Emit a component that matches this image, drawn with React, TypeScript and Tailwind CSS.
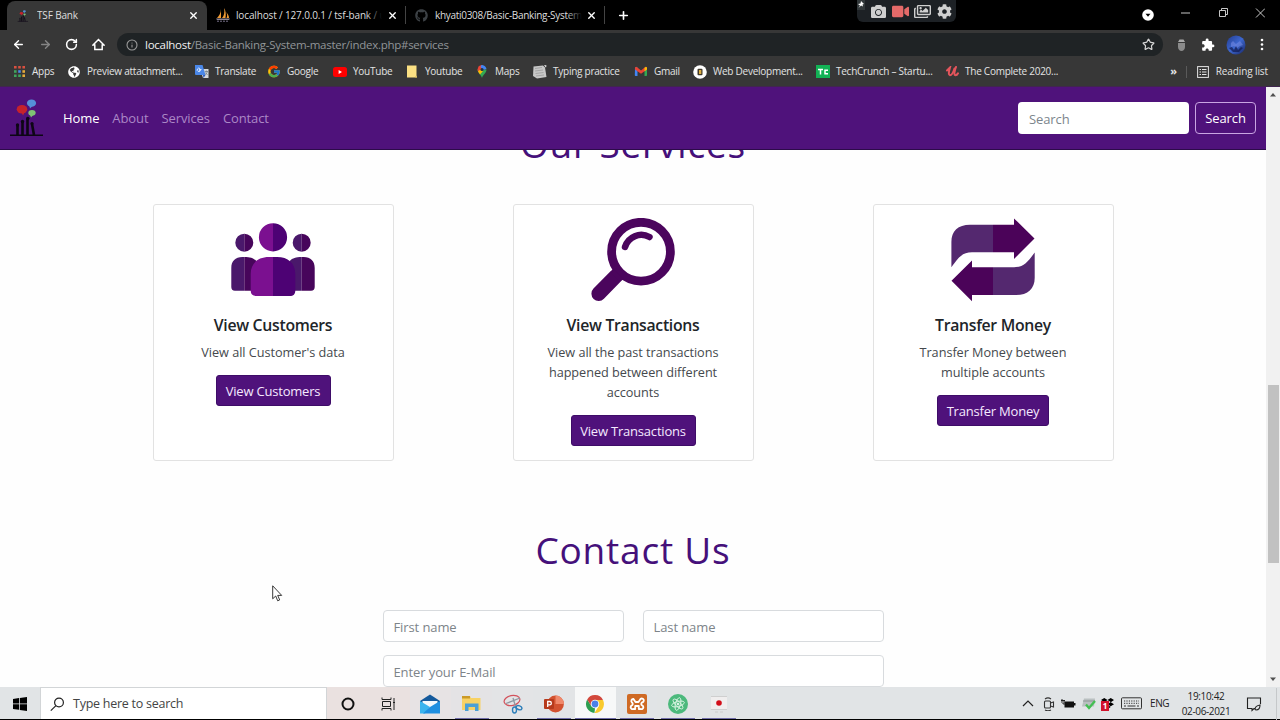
import React from "react";
import { ArrowLeft, ArrowRight, RotateCw, Info, X, Plus, Star } from "lucide-react";
import { FaGithub, FaCamera, FaVideo, FaRegImages, FaCog, FaGlobeAmericas, FaDropbox } from "react-icons/fa";
import { FcGoogle } from "react-icons/fc";
import { MdExtension } from "react-icons/md";

const BankLogo = ({ className }: { className: string }) => (
  <svg className={className} viewBox="0 0 34 38">
    <path d="M0 36.200h33" stroke="#0d0615" strokeWidth="1.600" />
    <path d="M7.500 36V27M12.500 36V23M17.500 36V20M24 36L22 25" stroke="#0d0615" strokeWidth="2.600" />
    <circle cx="7.500" cy="26" r="1.700" fill="#0d0615" />
    <circle cx="12.500" cy="22.500" r="1.700" fill="#0d0615" />
    <circle cx="17.800" cy="19.500" r="1.800" fill="#0d0615" />
    <circle cx="22" cy="24.500" r="1.600" fill="#0d0615" />
    <ellipse cx="12" cy="10.300" rx="5.300" ry="4.200" fill="#c5222c" />
    <path d="M11 12.500l2 4 2-4z" fill="#c5222c" />
    <ellipse cx="21.500" cy="4.100" rx="4.600" ry="3.600" fill="#5590d8" />
    <path d="M19 5.500l1 4 3-3z" fill="#5590d8" />
    <ellipse cx="22" cy="13.800" rx="3.700" ry="2.900" fill="#7fc374" />
    <path d="M19.500 14.500l1.500 4 2.500-3z" fill="#7fc374" />
  </svg>
);

const SailIcon = () => (
  <svg width="14" height="14" viewBox="0 0 14 14">
    <path d="M5 1C5 5 3 8 1 10h4zM8 0c1 4 0 8-2 10h3.500C10 6 10 3 8 0zM10 4c1.500 2 1.500 4 .5 6H13c0-2-1-4-3-6z" fill="#ee9a35" />
    <path d="M0 10.500h14l-1 1.500H1z" fill="#8a8291" />
    <path d="M1 13.200h12" stroke="#77708a" strokeWidth="1" strokeDasharray="2 1" />
  </svg>
);

const TabTitle = ({ children }: { children: React.ReactNode }) => (
  <span className="flex-1 overflow-hidden whitespace-nowrap text-[10px] tracking-[-0.15px]">{children}</span>
);

const TabStrip = () => (
  <div className="flex h-[30px] items-center bg-black pl-[7px] text-[#dedede]">
    <div className="mt-px flex h-[29px] w-[200px] items-center self-start rounded-t-lg bg-[#373737] pl-[10px] pr-[8px]">
      <BankLogo className="mr-2 h-3 w-3" />
      <TabTitle>TSF Bank</TabTitle>
      <X size={11} strokeWidth={3} className="text-white" />
    </div>
    <div className="flex h-[18px] w-[199px] items-center border-r border-[#444] pl-[9px] pr-[7px]">
      <SailIcon />
      <div className="relative ml-[6px] flex h-4 w-[146px] items-center overflow-hidden">
        <TabTitle>localhost / 127.0.0.1 / tsf-bank / u</TabTitle>
        <div className="absolute inset-y-0 right-0 w-4 bg-gradient-to-r from-transparent to-black" />
      </div>
      <X size={11} strokeWidth={3} className="ml-auto text-white" />
    </div>
    <div className="flex h-[18px] w-[199px] items-center border-r border-[#444] pl-[9px] pr-[7px]">
      <FaGithub size={13} className="text-[#3c4145]" />
      <div className="relative ml-[7px] flex h-4 w-[147px] items-center overflow-hidden">
        <span className="whitespace-nowrap text-[10px] tracking-[-0.3px]">khyati0308/Basic-Banking-System</span>
        <div className="absolute inset-y-0 right-0 w-4 bg-gradient-to-r from-transparent to-black" />
      </div>
      <X size={11} strokeWidth={3} className="ml-auto text-white" />
    </div>
    <Plus size={13} strokeWidth={3} className="ml-3 text-white" />
    <div className="ml-auto flex items-center pr-[15px]">
      <svg className="mr-[27px]" width="12" height="12" viewBox="0 0 12 12">
        <circle cx="6" cy="6" r="5.800" fill="#fff" />
        <path d="M3.500 4.700h5L6 7.700z" fill="#000" />
      </svg>
      <svg className="-mt-1" width="84" height="10" viewBox="0 0 84 10" fill="none" stroke="#ddd">
        <path d="M0 5h9M75 .5l9 9M84 .5l-9 9" strokeWidth=".9" />
        <path d="M38.500 2.500h6v6h-6zM40.500 2.500v-2h6v6h-2" strokeWidth=".9" />
      </svg>
    </div>
  </div>
);

const RecorderBar = () => (
  <div className="absolute left-[857px] top-0 flex h-[22px] w-[99px] items-center rounded-b-md bg-[#1d2125] text-[#cfcfcf]">
    <svg className="mr-[6px] self-start" width="8" height="10" viewBox="0 0 8 10">
      <path d="M0 0h8v10H0z" fill="#32383a" />
      <path d="M4 1l3 3-1.500.5.5 2-2-1-2.500 2.500L3 5.500l-2-1.500 2.500-.5z" fill="#fff" />
    </svg>
    <FaCamera size={15} />
    <FaVideo size={17} className="ml-[6px] text-[#e56a69]" />
    <FaRegImages size={17} className="ml-[5px]" />
    <FaCog size={15} className="ml-[6px]" />
  </div>
);

const AddressBar = () => (
  <div className="flex h-[27px] items-center bg-[#373737] pl-3 pt-[2px]">
    <ArrowLeft size={13} strokeWidth={2.6} className="text-white" />
    <ArrowRight size={13} strokeWidth={2.6} className="ml-[14px] text-[#858585]" />
    <RotateCw size={13} strokeWidth={2.8} className="ml-[13px] text-white" />
    <svg className="ml-[14px]" width="13" height="13" viewBox="0 0 13 13" fill="none" stroke="#fff" strokeWidth="1.500">
      <path d="M1 7L6.500 1.500 12 7H10.200v4.500H2.800V7z" />
    </svg>
    <div className="ml-[12px] flex h-[23px] w-[1046px] items-center rounded-full bg-[#1f2325] pl-[9px] pr-[8px]">
      <Info size={12} strokeWidth={2.2} className="text-[#9b9b9b]" />
      <span className="ml-[7px] text-[11.500px] leading-4 tracking-[-0.27px] text-[#919598]">
        <span className="text-[#f1f1f1]">localhost</span>/Basic-Banking-System-master/index.php#services
      </span>
      <Star size={13} strokeWidth={2.2} className="ml-auto text-[#d5d5d5]" />
    </div>
    <svg className="ml-[14px]" width="9" height="12" viewBox="0 0 9 12" fill="#8b8b8b">
      <path d="M2.500.5h4L8 3H1z" fill="#aaa" />
      <path d="M1 4h7v4c0 2-1.500 4-3.500 4S1 10 1 8z" />
    </svg>
    <MdExtension size={14} className="ml-[15px] text-white" />
    <svg className="ml-[11px]" width="20" height="20" viewBox="0 0 20 20">
      <defs>
        <linearGradient id="avatar" x1="0" y1="0" x2="1" y2="1">
          <stop offset="0" stopColor="#233b8e" />
          <stop offset=".5" stopColor="#3d67cf" />
          <stop offset="1" stopColor="#172565" />
        </linearGradient>
      </defs>
      <circle cx="10" cy="10" r="9.500" fill="url(#avatar)" />
      <path d="M5 8l2-2 3 3 4-3 3 4-3 1-3 2-3-2-3 1z" fill="#7d8fe8" opacity=".5" />
      <path d="M3 13l3-1 2 3 2-4 2 4 3-3 2 1-4 4H7z" fill="#10194e" opacity=".7" />
    </svg>
    <svg className="ml-[14px]" width="4" height="13" viewBox="0 0 4 13" fill="#fff">
      <circle cx="2" cy="2" r="1.300" />
      <circle cx="2" cy="6.500" r="1.300" />
      <circle cx="2" cy="11" r="1.300" />
    </svg>
  </div>
);

const AppsIcon = () => (
  <svg width="13" height="13" viewBox="0 0 13 13">
    <path d="M1 1h2.600v2.600H1zM5.200 1h2.600v2.600H5.200zM9.400 1H12v2.600H9.400z" fill="#d85040" />
    <path d="M1 5.200h2.600v2.600H1z" fill="#3fa55d" />
    <path d="M5.200 5.200h2.600v2.600H5.200z" fill="#4b86e8" />
    <path d="M9.400 5.200H12v2.600H9.400z" fill="#e4a93b" />
    <path d="M1 9.400h2.600V12H1zM5.200 9.400h2.600V12H5.200z" fill="#3fa55d" />
    <path d="M9.400 9.400H12V12H9.400z" fill="#e4a93b" />
  </svg>
);

const TranslateIcon = () => (
  <svg width="14" height="13" viewBox="0 0 14 13">
    <path d="M5 4h8.500v9H8z" fill="#d6d9dc" />
    <path d="M0 0h7.500l3 10H1a1 1 0 01-1-1z" fill="#4a87e8" />
    <path d="M8 10h2.500L8.500 13z" fill="#2a56b5" />
    <path d="M6.500 4.500H4.300v1h1.200A1.700 1.700 0 114.900 3.500" fill="none" stroke="#fff" strokeWidth=".8" />
    <path d="M9.800 6.500H13M11.300 5.500v1M10 9.500c1.500-.8 2-1.500 2.300-3M10.500 7.500l2 2.500" stroke="#66747d" strokeWidth=".7" fill="none" />
  </svg>
);

const YoutubeIcon = () => (
  <svg width="14" height="10" viewBox="0 0 14 10">
    <rect width="14" height="10" rx="2.500" fill="#f00" />
    <path d="M5.600 3v4L9 5z" fill="#fff" />
  </svg>
);

const FolderIcon = () => (
  <svg width="14" height="13" viewBox="0 0 14 13">
    <path d="M2 .5h9.500v10L12 12v.5H2z" fill="#fbe083" />
    <path d="M11 10.500l1 2h-2z" fill="#d7b955" />
  </svg>
);

const MapsIcon = () => (
  <svg width="14" height="13" viewBox="0 0 14 13">
    <path d="M7 13C6.500 10 2.500 8 2.500 4.500L7 4.500h4.500C11.500 8 7.500 10 7 13z" fill="#34a853" />
    <path d="M3.500 1.600A4.500 4.500 0 017 0l.5 3L4 7.500C3 6.300 2.500 5.500 2.500 4.500z" fill="#ea4335" />
    <path d="M3 6.200L6 4l2 2-3 3.500z" fill="#fbbc04" />
    <path d="M6.500 0c2.500-.2 4.500 1.500 5 4L8 5 5.500 2z" fill="#4285f4" />
    <circle cx="7" cy="4.500" r="1.600" fill="#27303d" />
  </svg>
);

const TypingIcon = () => (
  <svg width="14" height="14" viewBox="0 0 14 14">
    <path d="M.5 1.500L10 .5l2 2L13.500 12 4 13.500 0 11z" fill="#c7c7c7" />
    <path d="M2 3.500l7-1M2 6l8-1M2.500 8.500l8-1M3 11l8-1" stroke="#9a9a9a" strokeWidth=".8" />
    <path d="M11 0l2.500.5-.5 2z" fill="#fff" />
  </svg>
);

const GmailIcon = () => (
  <svg width="14" height="11" viewBox="0 0 14 11">
    <path d="M1 1.500h2.500V10H1.500a.7.700 0 01-.7-.7z" fill="#4285f4" />
    <path d="M10.500 1.500H13v7.800a.7.700 0 01-.7.700h-1.800z" fill="#34a853" />
    <path d="M1 1.500l1.500-.8L7 4.500 11.500.7l1.500.8v2L7 7.800 1 3.500z" fill="#ea4335" />
    <path d="M10.500 2l1.500-1.200 1 1v1.800L10.500 5.300z" fill="#fbbc04" />
  </svg>
);

const WebDevIcon = () => (
  <svg width="14" height="14" viewBox="0 0 14 14">
    <circle cx="7" cy="7" r="6.800" fill="#fff" />
    <rect x="4.500" y="3.700" width="5" height="6.600" rx="1" fill="#3f382a" />
    <path d="M6 5h2.300v4H6z" fill="#dcae42" />
  </svg>
);

const TechIcon = () => (
  <svg width="14" height="13" viewBox="0 0 14 13">
    <path d="M0 0h14v13H0z" fill="#12b255" />
    <path d="M2 4.500h5M4.500 4.500v5M12 5.200H9v3.500h3" fill="none" stroke="#fff" strokeWidth="1.500" />
  </svg>
);

const UdemyIcon = () => (
  <svg width="13" height="11" viewBox="0 0 13 11" fill="none" stroke="#e4555c" strokeLinecap="round">
    <path d="M1 4.500L4 1.500C3 5 2 9 4 9.300c2 0 3.500-3.500 4.500-6.800" strokeWidth="2" />
    <path d="M10 1C8.500 5 7.500 9 9.500 9.300c1 0 2-1 2.500-2" strokeWidth="2" />
  </svg>
);

const bookmarks = [
  { icon: <AppsIcon />, text: "Apps", box: "w-[55px]" },
  { icon: <FaGlobeAmericas size={12} className="text-white" />, text: "Preview attachment...", box: "w-[128px]" },
  { icon: <TranslateIcon />, text: "Translate", box: "w-[72px]" },
  { icon: <FcGoogle size={15} />, text: "Google", box: "w-[66px]" },
  { icon: <YoutubeIcon />, text: "YouTube", box: "w-[72px]" },
  { icon: <FolderIcon />, text: "Youtube", box: "w-[70px]" },
  { icon: <MapsIcon />, text: "Maps", box: "w-[58px]" },
  { icon: <TypingIcon />, text: "Typing practice", box: "w-[101px]" },
  { icon: <GmailIcon />, text: "Gmail", box: "w-[59px]" },
  { icon: <WebDevIcon />, text: "Web Development...", box: "w-[123px]" },
  { icon: <TechIcon />, text: "TechCrunch – Startu...", box: "w-[129px]" },
  { icon: <UdemyIcon />, text: "The Complete 2020...", box: "w-[130px]" },
];

const BookmarksBar = () => (
  <div className="flex h-[30px] items-center border-b border-[#40264f] bg-[#373737] pl-3 text-[10px] tracking-[-0.25px] text-[#e4e4e4]">
    {bookmarks.map((b) => (
      <div key={b.text} className={"flex shrink-0 items-center whitespace-nowrap " + b.box}>
        <span className="mr-[6px] flex w-[14px] justify-center">{b.icon}</span>
        {b.text}
      </div>
    ))}
    <div className="ml-auto flex items-center pr-[12px]">
      <span className="mb-[2px] text-[11px] font-bold leading-none">»</span>
      <div className="ml-[9px] mr-[10px] h-3 w-px bg-[#5a5a5a]" />
      <svg width="12" height="12" viewBox="0 0 12 12" fill="none" stroke="#e4e4e4">
        <rect x=".6" y=".6" width="10.800" height="10.800" />
        <path d="M2.500 3.500H4M5 3.500h4.500M2.500 6H4M5 6h4.500M2.500 8.500H4M5 8.500h4.500" />
      </svg>
      <span className="ml-[7px] whitespace-nowrap tracking-[-0.1px]">Reading list</span>
    </div>
  </div>
);

const Navbar = () => (
  <nav className="flex h-[63px] shrink-0 items-center border-b border-[#2c0b49] bg-[#4f127b] px-[10px] text-[13px] tracking-[-0.1px]">
    <BankLogo className="h-[38px] w-[34px]" />
    <ul className="ml-[19px] flex gap-[13px] pt-[2px] text-[#ab87c6]">
      <li><a href="#" className="text-white">Home</a></li>
      <li><a href="#about">About</a></li>
      <li><a href="#services">Services</a></li>
      <li><a href="#contact">Contact</a></li>
    </ul>
    <input className="ml-auto h-[32px] w-[171px] rounded-[4px] bg-white px-[11px] pt-px placeholder:text-[#7c858c]" placeholder="Search" />
    <button className="ml-[6px] h-[32px] w-[61px] rounded-[4px] border border-[#c9a5e2] pt-px text-white">Search</button>
  </nav>
);

const CustomersIcon = () => (
  <svg width="84" height="84" viewBox="0 0 84 84">
    <path d="M13.300 15.700a9 9 0 000 18zM13.300 39h-2C4.300 39 .3 43 .3 50v19c0 2.400 1.200 3.700 3.700 3.700h9.300z" fill="#4a186b" />
    <path d="M13.300 15.700a9 9 0 010 18zM13.300 39c6 0 9 1 12 4v29.700h-12z" fill="#47055b" />
    <path d="M70.700 15.700a9 9 0 000 18zM70.700 39c-6 0-9 1-12 4v29.700h12z" fill="#4a186b" />
    <path d="M70.700 15.700a9 9 0 010 18zM70.700 39h2c7 0 11 4 11 11v19c0 2.400-1.200 3.700-3.700 3.700h-9.300z" fill="#47055b" />
    <path d="M42 5.200a14.100 14.100 0 000 28.200zM42 39h-4c-11 0-18.300 6-18.300 17v16.500c0 3.700 1.800 5.500 5.500 5.500H42z" fill="#7b1090" />
    <path d="M42 5.200a14.100 14.100 0 010 28.200zM42 39h4c11 0 18.300 6 18.300 17v16.500c0 3.700-1.800 5.500-5.500 5.500H42z" fill="#4d0274" />
  </svg>
);

const TransactionsIcon = () => (
  <svg width="84" height="84" viewBox="0 0 84 84" fill="none" stroke="#4b055d" strokeLinecap="round">
    <circle cx="50" cy="33.700" r="29.400" strokeWidth="8.800" />
    <path d="M34 28.700a17 17 0 0124.500-10" strokeWidth="6.500" transform="translate(0 .3)" />
    <path d="M7.700 75.700L25 58" strokeWidth="14.600" />
    <path d="M20.500 55.500l2-4.500 10 10-4.500 2z" fill="#4b055d" strokeWidth="1" />
  </svg>
);

const TransferIcon = () => (
  <svg width="84" height="84" viewBox="0 0 84 84">
    <path d="M42 6.700H19C7 6.700.4 13 .4 24v25.300C7 40 11 34.300 21 34.300h21z" fill="#54286f" />
    <path d="M42 6.700h21V.4l20.500 20.100L63 41v-6.700H42z" fill="#4b0359" />
    <path d="M42 77h23c12 0 18.700-6.300 18.700-17.300V34.400C77 43.700 73 49.200 63 49.200H42z" fill="#54286f" />
    <path d="M42 77H21v6.200L.5 62.800 21 42.600v6.600h21z" fill="#4b0359" />
  </svg>
);

const ServiceCard = ({ icon, title, text, wide }: { icon: React.ReactNode; title: string; text: string; wide: string }) => (
  <div className="flex h-[257px] w-[241px] flex-col items-center rounded-[3px] border border-[#e2e2e2] bg-white pt-[13px] text-center">
    {icon}
    <h5 className="mt-[13px] text-[15.800px] font-semibold leading-5 tracking-[-0.3px] text-[#212529]">{title}</h5>
    <p className="mt-[7px] w-[190px] text-[12.700px] leading-5 tracking-[-0.04px] text-[#45494d]">{text}</p>
    <button className={"mt-[13px] h-[31px] rounded-[3px] border border-[#3e0c68] bg-[#4f127b] pt-[2px] text-[13px] tracking-[-0.2px] text-[#f5e9ff] " + wide}>{title}</button>
  </div>
);

const Heading = ({ children }: { children: React.ReactNode }) => (
  <h1 className="text-center text-[37px] leading-[48px] tracking-[0.8px] text-[#45107a]">{children}</h1>
);

const Field = ({ text }: { text: string }) => (
  <input className="h-8 w-full rounded-[4px] border border-[#d8dbde] bg-white px-[10px] pt-px text-[13px] tracking-[-0.1px] placeholder:text-[#7d8489]" placeholder={text} />
);

const Page = () => (
  <main className="flex-1 overflow-hidden bg-[#fefefe]">
    <div className="-mt-[30px]">
      <Heading>Our Services</Heading>
    </div>
    <section id="services" className="mt-[36px] flex justify-center gap-[119px]">
      <ServiceCard icon={<CustomersIcon />} title="View Customers" text="View all Customer's data" wide="w-[115px]" />
      <ServiceCard icon={<TransactionsIcon />} title="View Transactions" text="View all the past transactions happened between different accounts" wide="w-[125px]" />
      <ServiceCard icon={<TransferIcon />} title="Transfer Money" text="Transfer Money between multiple accounts" wide="w-[112px]" />
    </section>
    <section id="contact" className="mx-auto mt-[65px] w-[501px]">
      <Heading>Contact Us</Heading>
      <div className="mt-[36px] grid grid-cols-2 gap-x-[19px] gap-y-[13px]">
        <Field text="First name" />
        <Field text="Last name" />
        <div className="col-span-2">
          <Field text="Enter your E-Mail" />
        </div>
      </div>
    </section>
  </main>
);

const Scrollbar = () => (
  <div className="flex w-[14px] flex-col items-center bg-[#f1f1f1]">
    <svg className="mt-[5px]" width="8" height="5" viewBox="0 0 8 5"><path d="M1 4.500l3-3.500 3 3.500z" fill="#505050" /></svg>
    <div className="mt-[288px] h-[178px] w-[11px] bg-[#c1c1c1]" />
    <svg className="mb-[5px] mt-auto" width="8" height="5" viewBox="0 0 8 5"><path d="M1 .5l3 3.500 3-3.500z" fill="#505050" /></svg>
  </div>
);

const taskbarApps = [
  {
    name: "cortana",
    cell: "bg-[#eae1e0]",
    icon: <svg width="14" height="14" viewBox="0 0 14 14"><circle cx="7" cy="7" r="5.500" fill="none" stroke="#111" strokeWidth="2" /></svg>,
  },
  {
    name: "taskview",
    cell: "bg-[#eae1e0]",
    icon: (
      <svg width="15" height="14" viewBox="0 0 15 14" fill="none" stroke="#222">
        <path d="M1 .5v2h9v-2M1.500 4.500h8v5h-8zM1 13.500v-2h9v2M13 1v3M13 7v6" />
        <path d="M12 5.500h2" strokeWidth="2" />
      </svg>
    ),
  },
  {
    name: "mail",
    cell: "bg-[#e7e3e4]",
    icon: (
      <svg width="20" height="20" viewBox="0 0 20 20">
        <path d="M0 7l10-6.500L20 7v3H0z" fill="#155a9c" />
        <path d="M2.500 7h15v7h-15z" fill="#f2f8fc" />
        <path d="M0 7l10 6-5 6.500H0z" fill="#39b4ef" />
        <path d="M20 7l-10 6-7 6.500h17z" fill="#1e8fe0" />
      </svg>
    ),
  },
  {
    name: "explorer",
    cell: "bg-[#e4e3e5]",
    open: "w-[34px]",
    icon: (
      <svg width="19" height="17" viewBox="0 0 19 17">
        <path d="M0 1h8l1 2h9.500v12H0z" fill="#f8d264" />
        <path d="M0 1h8v2.500H0z" fill="#cb9a28" />
        <path d="M3 8.500h13.500V16H13v-4H6.500v4H3z" fill="#4ba0d5" />
      </svg>
    ),
  },
  {
    name: "snip",
    cell: "bg-[#e3e4e6]",
    icon: (
      <svg width="20" height="20" viewBox="0 0 20 20" fill="none">
        <ellipse cx="9" cy="6.500" rx="8" ry="5" stroke="#d3525c" strokeWidth="1.200" transform="rotate(-12 9 6.500)" />
        <path d="M3 9.500L17 4M10 4l3 10" stroke="#8e98a2" strokeWidth="1.300" />
        <ellipse cx="11.500" cy="16" rx="2" ry="3" stroke="#2c7eb9" strokeWidth="1.400" />
        <ellipse cx="16" cy="13.700" rx="3" ry="1.900" stroke="#2c7eb9" strokeWidth="1.400" transform="rotate(20 16 13.700)" />
      </svg>
    ),
  },
  {
    name: "powerpoint",
    cell: "bg-[#e2e4e6]",
    open: "w-[34px]",
    icon: (
      <svg width="20" height="18" viewBox="0 0 20 18">
        <circle cx="11.500" cy="9" r="8.400" fill="#d35230" />
        <path d="M11.500.6A8.400 8.400 0 0119.900 9h-8.400z" fill="#f0896b" />
        <rect y="4" width="10" height="10" rx="1" fill="#b73a1c" />
        <path d="M3.700 12V6.500h2a1.600 1.600 0 010 3.300h-2" fill="none" stroke="#fff" strokeWidth="1.300" />
      </svg>
    ),
  },
  {
    name: "chrome",
    cell: "bg-[#f7f8f8]",
    open: "w-[41px]",
    icon: (
      <svg width="18" height="18" viewBox="0 0 18 18">
        <path d="M1.200 4.500L5.300 11 9 13l-.5 5A9 9 0 011.200 4.500z" fill="#2d9e50" />
        <path d="M9 5h8a9 9 0 01-8.500 13l4.300-7z" fill="#f9c92c" />
        <path d="M1.200 4.500A9 9 0 0117 5H9l-3.800 6z" fill="#d2483c" />
        <circle cx="9" cy="9" r="4.300" fill="#fff" />
        <circle cx="9" cy="9" r="3.400" fill="#4a80e8" />
      </svg>
    ),
  },
  {
    name: "xampp",
    cell: "bg-[#e1e4e6]",
    open: "w-[34px]",
    icon: (
      <svg width="20" height="20" viewBox="0 0 20 20">
        <rect width="20" height="20" rx="2" fill="#cf6a24" />
        <path d="M6.500 5a2 2 0 00-1.500 3.500c1 .8 1 2 0 2.800A2 2 0 106.500 15h1.700V12h3.600v3h1.700a2 2 0 101.500-3.700c-1-.8-1-2 0-2.800A2 2 0 1013.500 5L11.500 8h-3z" fill="none" stroke="#fff" strokeWidth="1.800" strokeLinejoin="round" />
      </svg>
    ),
  },
  {
    name: "atom",
    cell: "bg-[#e1e4e5]",
    open: "w-[34px]",
    icon: (
      <svg width="20" height="20" viewBox="0 0 20 20" fill="none" stroke="#dcf5e5" strokeWidth=".9">
        <circle cx="10" cy="10" r="10" fill="#4cb97c" stroke="none" />
        <ellipse cx="10" cy="10" rx="2.500" ry="6.500" transform="rotate(15 10 10)" />
        <ellipse cx="10" cy="10" rx="2.500" ry="6.500" transform="rotate(75 10 10)" />
        <ellipse cx="10" cy="10" rx="2.500" ry="6.500" transform="rotate(135 10 10)" />
        <circle cx="10" cy="10" r="1" fill="#fff" />
      </svg>
    ),
  },
  {
    name: "recorder",
    cell: "bg-[#e1e4e5]",
    open: "w-[34px]",
    icon: (
      <svg width="16" height="18" viewBox="0 0 16 18">
        <path d="M0 2h16v12H0z" fill="#f0eeee" />
        <path d="M0 1.500h16M0 14.500h16" stroke="#cfcfcf" />
        <circle cx="8" cy="8" r="2.800" fill="#d20d18" />
        <path d="M4 17h3M9 17h3" stroke="#c6c6c6" strokeWidth=".8" />
      </svg>
    ),
  },
];

const Taskbar = () => (
  <footer className="flex h-[33px] shrink-0 items-center border-b border-black bg-[#e1e4e6]">
    <div className="flex h-full w-10 items-center justify-center pt-[2px]">
      <svg width="14" height="14" viewBox="0 0 14 14">
        <path d="M0 2l6-.9v5.500H0zM6.800 1L14 0v6.600H6.800zM0 7.300h6v5.500L0 12zM6.800 7.300H14V14l-7.200-1z" />
      </svg>
    </div>
    <div className="flex h-full w-[287px] items-center border-x border-t border-[#d2d5d7] bg-white pl-[9px] pt-px">
      <svg width="15" height="15" viewBox="0 0 15 15" fill="none" stroke="#222" strokeWidth="1.200">
        <circle cx="9" cy="5.500" r="4.400" />
        <path d="M5.700 8.800L.8 13.700" />
      </svg>
      <span className="ml-[8px] text-[12.500px] tracking-[-0.25px] text-[#444]">Type here to search</span>
    </div>
    <div className="grid h-full w-[413px] grid-cols-10">
      {taskbarApps.map((app) => (
        <div key={app.name} className={"flex flex-col items-center " + app.cell}>
          <div className="flex flex-1 items-center pt-[2px]">{app.icon}</div>
          <div className={app.open ? "h-px bg-[#6f6ca8] " + app.open : "h-px"} />
        </div>
      ))}
    </div>
    <div className="ml-auto flex items-center pt-px text-[10px] text-[#222]">
      <svg width="12" height="7" viewBox="0 0 12 7" fill="none" stroke="#222" strokeWidth="1.200"><path d="M1 6l5-5 5 5" /></svg>
      <svg className="ml-[9px]" width="12" height="14" viewBox="0 0 12 14" fill="none" stroke="#333" strokeWidth="1.100">
        <rect x="1.500" y="4" width="6" height="7" rx="1" />
        <path d="M7.500 6l3-1v5l-3-1M2 2c2-1.500 4-1.500 6 0M2 13c2 1 4 1 6 0" />
      </svg>
      <svg className="ml-[6px]" width="15" height="10" viewBox="0 0 15 10">
        <path d="M3.500 2.500H13v1.500h1.500v2.500H13v2H3.500z" fill="#111" />
        <path d="M0 1.500h4M1 0v3.500l2 2V1" stroke="#222" fill="none" />
      </svg>
      <svg className="ml-[6px]" width="14" height="13" viewBox="0 0 14 13">
        <path d="M2 1.500h11l-1 8H0z" fill="#b9bfc0" />
        <path d="M1 4h12" stroke="#8e9596" />
        <path d="M4 7.500l3 3.500 6-7" fill="none" stroke="#43bf52" strokeWidth="2.300" />
      </svg>
      <div className="relative ml-[5px] h-[14px] w-[13px]">
        <FaDropbox size={13} className="text-black" />
        <span className="absolute bottom-0 left-0 h-[10px] w-[8px] bg-[#d2122c] text-center text-[8px] font-bold leading-[10px] text-white">1</span>
      </div>
      <svg className="ml-[7px]" width="21" height="13" viewBox="0 0 21 13" fill="none" stroke="#333">
        <rect x=".5" y=".8" width="20" height="11" rx="1" />
        <path d="M3 4h15M3 6.300h15" strokeDasharray="1.200 1.200" />
        <path d="M3 9h2M6.500 9h8M16 9h2" />
      </svg>
      <span className="ml-[8px] w-[20px] tracking-[-0.4px]">ENG</span>
      <div className="ml-[10px] w-[52px] whitespace-nowrap text-center leading-[15px] tracking-[-0.35px]">
        <div>19:10:42</div>
        <div>02-06-2021</div>
      </div>
      <svg className="ml-[14px]" width="16" height="16" viewBox="0 0 16 16" fill="none" stroke="#222" strokeWidth="1.100">
        <path d="M9 12.500H8L6 14.500v-2H1.500V2h13v6" />
        <path d="M9 13.500c0-3 2-4 5-4.500 0 3-1 5-4 5z" />
      </svg>
      <div className="ml-[14px] h-[32px] w-[4px] border-l border-[#c5c8ca]" />
    </div>
  </footer>
);

const App = () => (
  <div className="relative flex h-[720px] w-[1280px] flex-col overflow-hidden font-['Open_Sans','Noto_Sans',sans-serif]">
    <TabStrip />
    <RecorderBar />
    <AddressBar />
    <BookmarksBar />
    <div className="flex h-[600px]">
      <div className="flex flex-1 flex-col">
        <Navbar />
        <Page />
      </div>
      <Scrollbar />
    </div>
    <Taskbar />
    <svg className="absolute left-[272px] top-[585px]" width="11" height="17" viewBox="0 0 11 17">
      <path d="M.7.800v13l3-2.800 2 4.800 2-.9-2-4.500h4z" fill="#fff" stroke="#222" strokeWidth=".9" />
    </svg>
  </div>
);

export default App;
